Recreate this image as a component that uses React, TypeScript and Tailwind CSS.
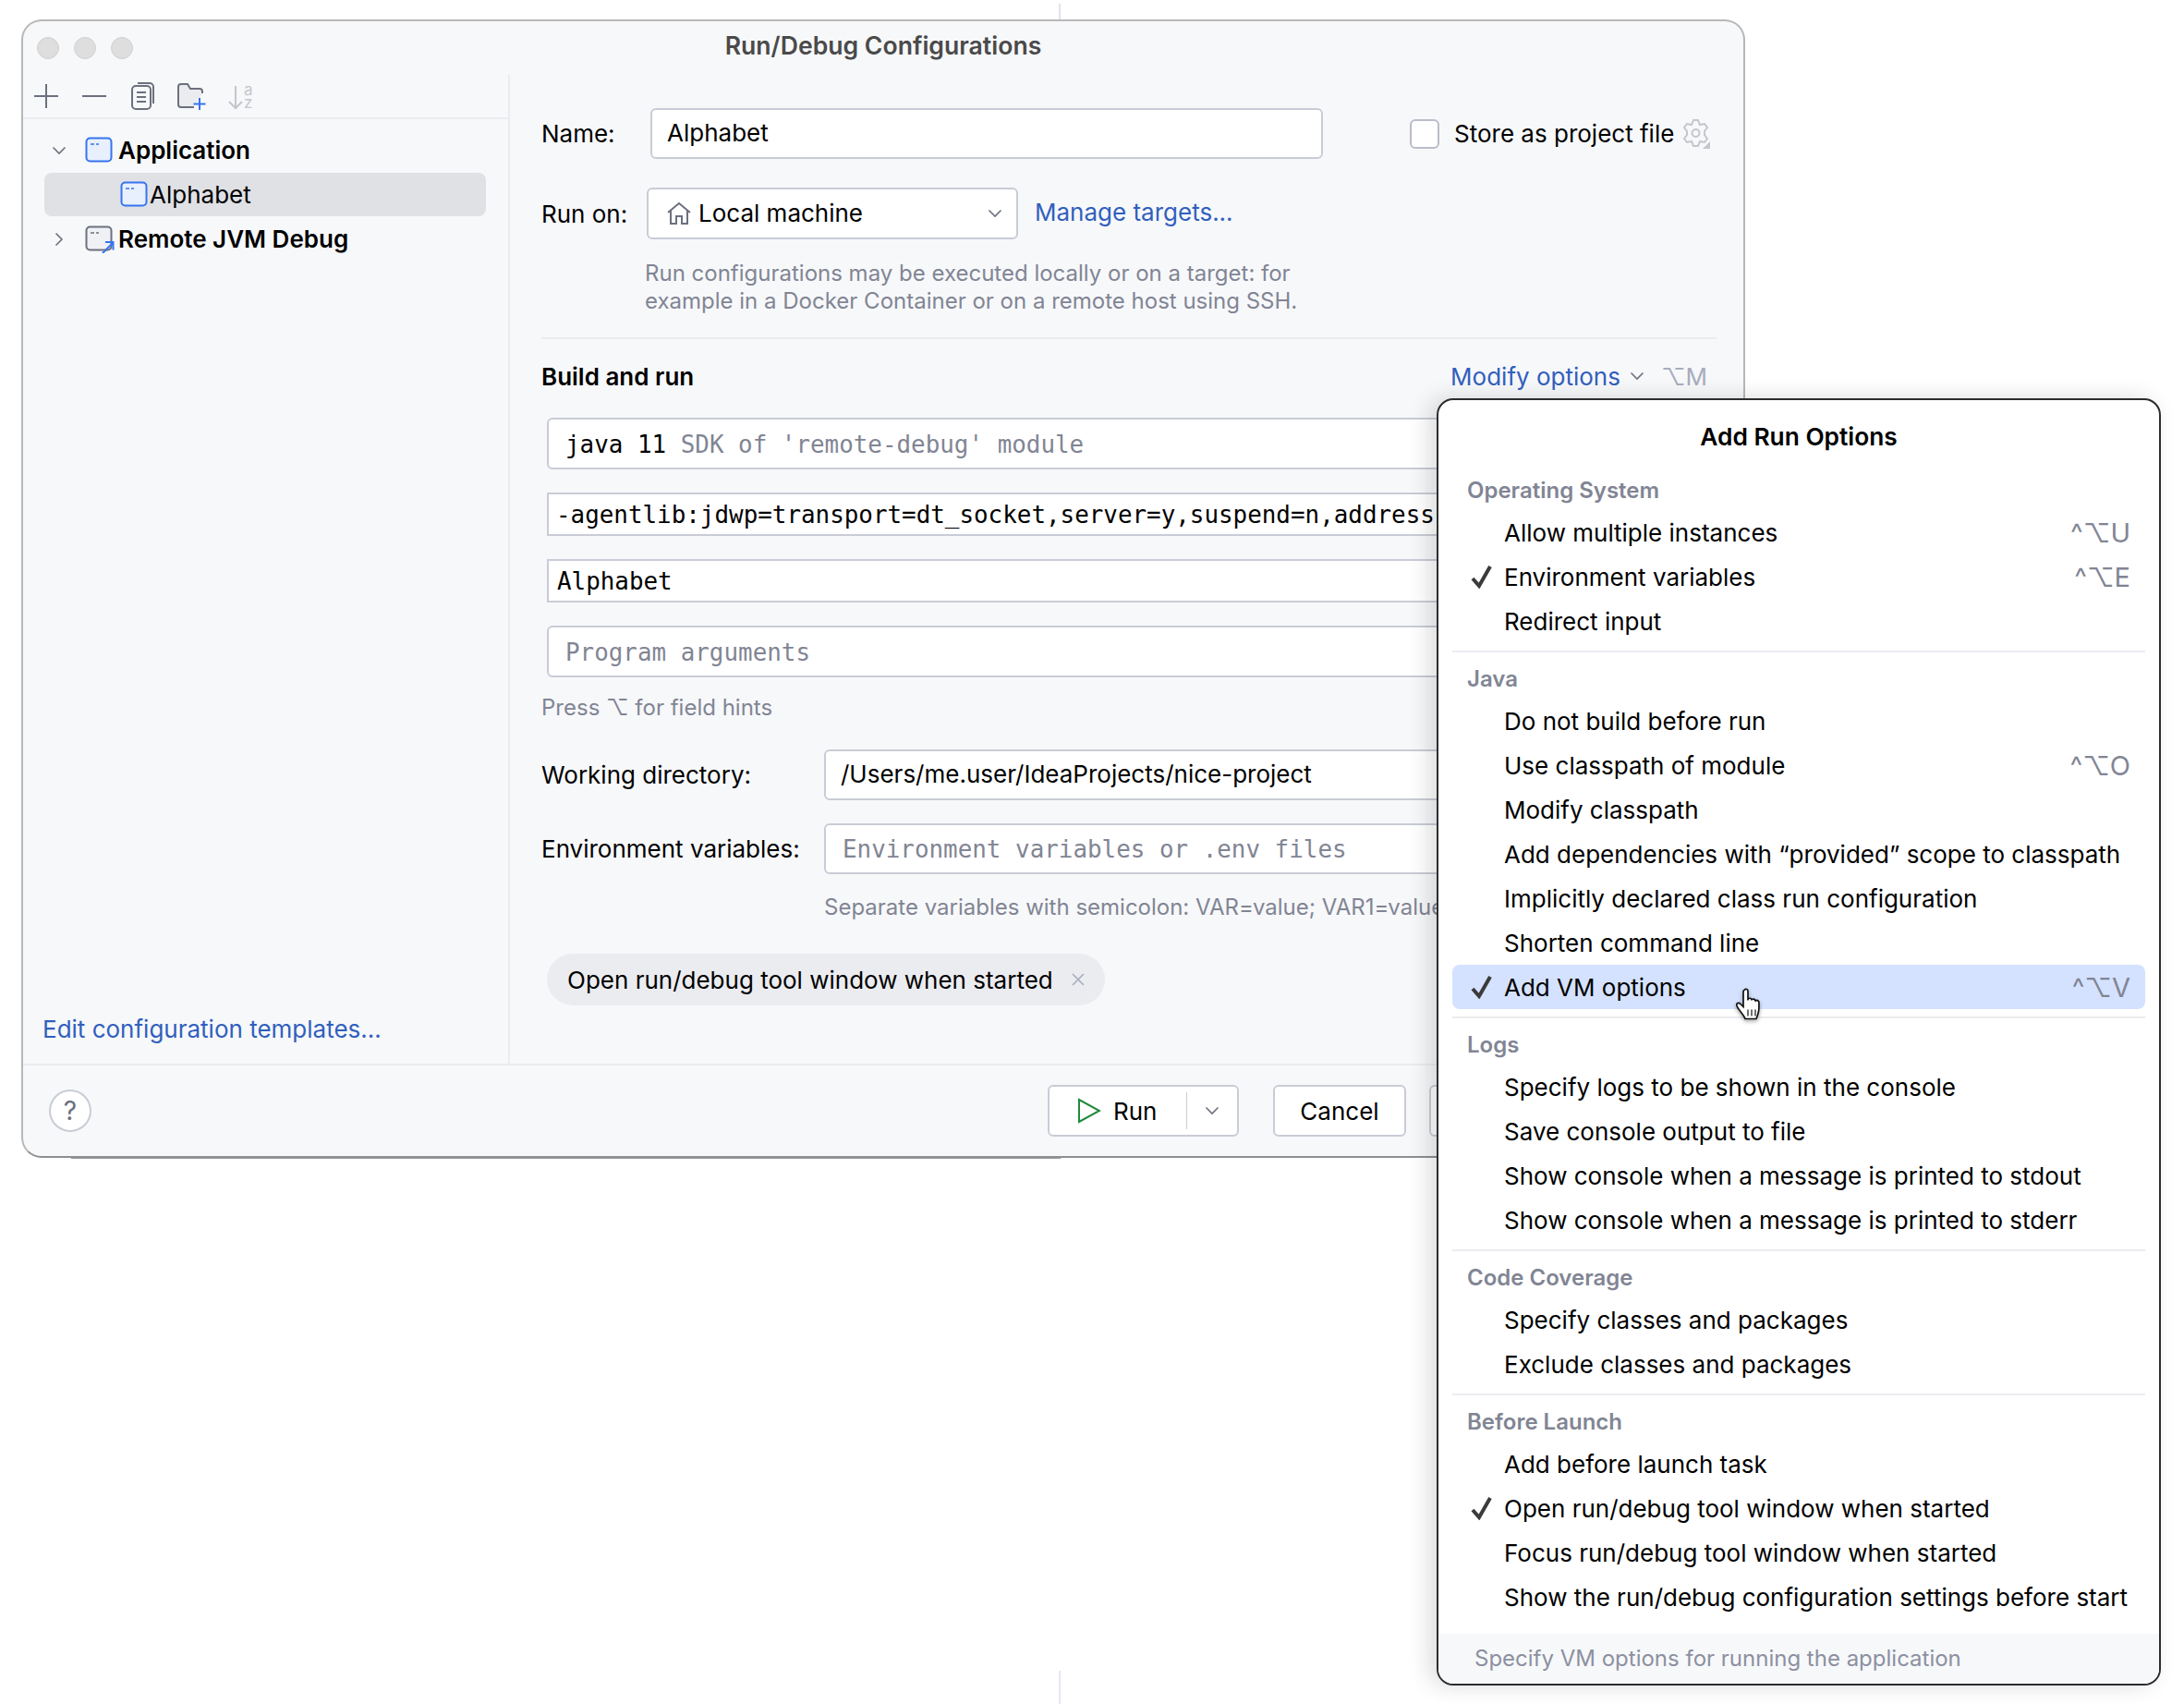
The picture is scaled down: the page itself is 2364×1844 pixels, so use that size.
import React from 'react';

type MenuRow = { label: string; checked?: boolean; keys?: string; active?: boolean };
type MenuSection = { title: string; rows: MenuRow[] };

const sections: MenuSection[] = [
  {
    title: 'Operating System',
    rows: [
      { label: 'Allow multiple instances', keys: '^⌥U' },
      { label: 'Environment variables', checked: true, keys: '^⌥E' },
      { label: 'Redirect input' },
    ],
  },
  {
    title: 'Java',
    rows: [
      { label: 'Do not build before run' },
      { label: 'Use classpath of module', keys: '^⌥O' },
      { label: 'Modify classpath' },
      { label: 'Add dependencies with “provided” scope to classpath' },
      { label: 'Implicitly declared class run configuration' },
      { label: 'Shorten command line' },
      { label: 'Add VM options', checked: true, keys: '^⌥V', active: true },
    ],
  },
  {
    title: 'Logs',
    rows: [
      { label: 'Specify logs to be shown in the console' },
      { label: 'Save console output to file' },
      { label: 'Show console when a message is printed to stdout' },
      { label: 'Show console when a message is printed to stderr' },
    ],
  },
  {
    title: 'Code Coverage',
    rows: [{ label: 'Specify classes and packages' }, { label: 'Exclude classes and packages' }],
  },
  {
    title: 'Before Launch',
    rows: [
      { label: 'Add before launch task' },
      { label: 'Open run/debug tool window when started', checked: true },
      { label: 'Focus run/debug tool window when started' },
      { label: 'Show the run/debug configuration settings before start' },
    ],
  },
];

const Chevron = ({ className = '' }: { className?: string }) => (
  <svg viewBox="0 0 16 10" className={className} fill="none" stroke="currentColor" strokeWidth="1.6">
    <path d="M1.5 1.5 8 8l6.5-6.5" />
  </svg>
);

const AppIcon = ({ remote = false }: { remote?: boolean }) => (
  <svg viewBox="0 0 32 30" className="h-[30px] w-[32px] shrink-0" fill="none">
    <rect
      x="1.5"
      y="1.5"
      width="27"
      height="25"
      rx="4"
      fill={remote ? '#f0f1f4' : '#e8effd'}
      stroke={remote ? '#6c707e' : '#3574f0'}
      strokeWidth="2"
    />
    <path d="M6 8h4M12 8h3" stroke={remote ? '#6c707e' : '#3574f0'} strokeWidth="1.6" />
    {remote && <path d="M19 30 30 19M22 18h8.500v8.500" stroke="#3574f0" strokeWidth="2" />}
  </svg>
);

const Toolbar = () => (
  <div className="flex h-[48px] items-center border-b-2 border-[#ebecf0] text-[#6c707e]">
    <svg viewBox="0 0 28 28" className="ml-[11px] h-[28px] w-[28px]" stroke="currentColor" strokeWidth="2">
      <path d="M14 1v26M1 14h26" />
    </svg>
    <svg viewBox="0 0 28 28" className="ml-[24px] h-[28px] w-[28px]" stroke="currentColor" strokeWidth="2">
      <path d="M1 14h26" />
    </svg>
    <svg viewBox="0 0 26 30" className="ml-[26px] h-[30px] w-[26px]" fill="none" stroke="currentColor" strokeWidth="2">
      <rect x="1" y="4" width="20" height="25" rx="4" />
      <path d="M7 1h13a4 4 0 0 1 4 4v18M6 11h10M6 16h10M6 21h10" />
    </svg>
    <svg viewBox="0 0 32 32" className="ml-[24px] h-[32px] w-[32px]" fill="none">
      <path
        d="M27 13v-2a3 3 0 0 0-3-3H14l-3-5H4a3 3 0 0 0-3 3v19a3 3 0 0 0 3 3h14"
        fill="#ebecf0"
        stroke="#6c707e"
        strokeWidth="2"
      />
      <path d="M24 18v13M17.500 24.500h13" stroke="#3574f0" strokeWidth="2" />
    </svg>
    <svg viewBox="0 0 30 36" className="ml-[23px] h-[36px] w-[30px]" fill="none" stroke="#c4c6cc" strokeWidth="2">
      <path d="M8 7v24M1 24l7 7 7-7" />
      <text x="17" y="17" fontSize="17" fill="#c4c6cc" stroke="none" fontFamily="Inter, sans-serif">a</text>
      <text x="17" y="31" fontSize="17" fill="#c4c6cc" stroke="none" fontFamily="Inter, sans-serif">z</text>
    </svg>
  </div>
);

const Sidebar = () => (
  <div className="flex w-[527px] shrink-0 flex-col border-r-2 border-[#ebecf0]">
    <Toolbar />
    <div className="mt-[10px] flex h-[47px] items-center pl-[31px] font-semibold">
      <Chevron className="h-[10px] w-[16px] text-[#6c707e]" />
      <span className="ml-[20px] flex items-center gap-[4px]">
        <AppIcon />
        Application
      </span>
    </div>
    <div className="mt-[1px] mr-[24px] ml-[23px] flex h-[47px] items-center rounded-[8px] bg-[#dfe1e5] pl-[82px]">
      <AppIcon />
      <span>Alphabet</span>
    </div>
    <div className="flex h-[49px] items-center pl-[31px] font-semibold">
      <Chevron className="h-[10px] w-[16px] -rotate-90 text-[#6c707e]" />
      <span className="ml-[20px] flex items-center gap-[4px]">
        <AppIcon remote />
        Remote JVM Debug
      </span>
    </div>
    <div className="mt-auto mb-[18px] pl-[21px] text-[#315fbd]">Edit configuration templates...</div>
  </div>
);

const Field = ({
  className = '',
  children,
}: {
  className?: string;
  children: React.ReactNode;
}) => (
  <div
    className={`flex items-center overflow-hidden border-2 border-[#c9ccd6] bg-white whitespace-nowrap ${className}`}
  >
    {children}
  </div>
);

const mono = "pt-[2px] font-['DejaVu_Sans_Mono',monospace] text-[25.900px] tracking-[0px]";

const MainPanel = () => (
  <div className="min-w-0 flex-1 pt-[36px] pl-[34px]">
    <div className="flex h-[55px] items-center">
      <span className="w-[118px] shrink-0">Name:</span>
      <Field className="h-[55px] w-[728px] rounded-[6px] pb-[2px] pl-[16px]">Alphabet</Field>
      <span className="ml-[94px] h-[32px] w-[32px] rounded-[6px] border-2 border-[#b9bdc9] bg-white" />
      <span className="ml-[16px]">Store as project file</span>
      <svg viewBox="0 0 30 32" className="ml-[9px] h-[32px] w-[30px]" fill="none" stroke="#c4c6cc" strokeWidth="2">
        <path d="M12 1h5l2 5 5-1 3 4-3 4v4l3 4-3 4-5-1-2 5h-5l-2-5-5 1-3-4 3-4v-4L2 9l3-4 5 1z" />
        <circle cx="14.500" cy="15" r="4" />
        <path d="M30 24v8h-8z" fill="#c4c6cc" stroke="none" />
      </svg>
    </div>
    <div className="mt-[31px] flex h-[56px] items-center">
      <span className="w-[114px] shrink-0">Run on:</span>
      <Field className="h-[56px] w-[402px] rounded-[6px] pl-[19px]">
        <svg viewBox="0 0 28 28" className="h-[28px] w-[28px] shrink-0" fill="none" stroke="#6c707e" strokeWidth="2">
          <path d="M2 13 14 3l12 10M5 11v14h6v-8h6v8h6V11" />
        </svg>
        <span className="mb-[2px] ml-[7px]">Local machine</span>
        <Chevron className="mr-[15px] ml-auto h-[10px] w-[16px] text-[#6c707e]" />
      </Field>
      <span className="mb-[4px] ml-[18px] text-[#315fbd]">Manage targets...</span>
    </div>
    <div className="mt-[22px] ml-[112px] text-[24px] leading-[30px] text-[#818594]">
      <div>Run configurations may be executed locally or on a target: for</div>
      <div>example in a Docker Container or on a remote host using SSH.</div>
    </div>
    <div className="mt-[24px] mr-[29px] h-[2px] bg-[#ebecf0]" />
    <div className="mt-[24px] flex h-[32px] items-center">
      <span className="font-semibold">Build and run</span>
      <span className="ml-auto text-[#315fbd]">Modify options</span>
      <Chevron className="ml-[10px] h-[10px] w-[16px] text-[#6c707e]" />
      <span className="mr-[39px] ml-[18px] text-[#a8adbd]">⌥M</span>
    </div>
    <div className="ml-[6px] flex flex-col">
      <Field className={`mt-[29px] h-[56px] rounded-[6px] pl-[18px] ${mono}`}>
        java 11&nbsp;<span className="text-[#818594]">SDK of 'remote-debug' module</span>
      </Field>
      <Field className={`mt-[25px] h-[47px] pl-[8px] ${mono}`}>
        -agentlib:jdwp=transport=dt_socket,server=y,suspend=n,address
      </Field>
      <Field className={`mt-[25px] h-[47px] pl-[9px] ${mono}`}>Alphabet</Field>
      <Field className={`mt-[25px] h-[56px] rounded-[6px] pl-[18px] text-[#818594] ${mono}`}>Program arguments</Field>
    </div>
    <div className="mt-[18px] flex h-[30px] items-center text-[24px] text-[#818594]">Press ⌥ for field hints</div>
    <div className="mt-[30px] flex h-[55px] items-center">
      <span className="w-[306px] shrink-0">Working directory:</span>
      <Field className="h-[55px] flex-1 rounded-[6px] pb-[2px] pl-[16px]">/Users/me.user/IdeaProjects/nice-project</Field>
    </div>
    <div className="mt-[25px] flex h-[55px] items-center">
      <span className="w-[306px] shrink-0">Environment variables:</span>
      <Field className={`h-[55px] flex-1 rounded-[6px] pl-[18px] text-[#818594] ${mono}`}>
        Environment variables or .env files
      </Field>
    </div>
    <div className="mt-[21px] ml-[306px] h-[30px] text-[24px] leading-[30px] whitespace-nowrap text-[#818594]">
      Separate variables with semicolon: VAR=value; VAR1=value1
    </div>
    <div className="mt-[35px] ml-[6px] flex h-[56px] w-[604px] items-center rounded-full bg-[#ebecf0] pl-[22px]">
      Open run/debug tool window when started
      <svg viewBox="0 0 14 14" className="ml-[20px] h-[14px] w-[14px]" stroke="#a8adbd" strokeWidth="1.600">
        <path d="m1 1 12 12M13 1 1 13" />
      </svg>
    </div>
  </div>
);

const Footer = () => (
  <div className="flex h-[100px] items-center border-t-2 border-[#ebecf0]">
    <span className="ml-[28px] flex h-[46px] w-[46px] items-center justify-center rounded-full border-2 border-[#c9ccd6] bg-white text-[28px] text-[#6c707e]">
      ?
    </span>
    <div className="ml-[1035px] flex h-[56px] w-[207px] items-center rounded-[6px] border-2 border-[#c9ccd6] bg-white pl-[30px]">
      <svg viewBox="0 0 26 28" className="h-[28px] w-[26px] shrink-0" fill="none" stroke="#208a3c" strokeWidth="2">
        <path d="M2 2v24l22-12z" />
      </svg>
      <span className="ml-[13px]">Run</span>
      <span className="ml-[32px] h-[40px] w-[1px] bg-[#c9ccd6]" />
      <Chevron className="ml-[19px] h-[10px] w-[16px] text-[#6c707e]" />
    </div>
    <span className="ml-[37px] flex h-[56px] w-[144px] items-center justify-center rounded-[6px] border-2 border-[#c9ccd6] bg-white">
      Cancel
    </span>
    <span className="ml-[25px] h-[56px] w-[60px] rounded-[6px] border-2 border-[#c9ccd6] bg-white" />
  </div>
);

const HandCursor = () => (
  <svg
    viewBox="0 0 30 36"
    className="absolute top-[1068px] left-[1879px] h-[37px] w-[30px] drop-shadow-[0_2px_2px_rgba(0,0,0,0.35)]"
    fill="#fff"
    stroke="#111"
    strokeWidth="1.700"
  >
    <path d="M9 3c2-2 4-1 4 1v10c0-3 4-3 4 0 0-2 4-2 4 1 1-2 4-1 4 2 0 7 0 10-3 17H10c-1-4-7-9-9-14-1-3 2-4 4-2l3 3V5c0-1 0-2 1-2z" />
    <path d="M13 24v7M17 24v7M21 24v7" strokeWidth="1.200" />
  </svg>
);

const Popup = () => (
  <div className="absolute top-[431px] left-[1555px] flex h-[1393px] w-[784px] flex-col overflow-hidden rounded-[18px] border-2 border-[#2b2d30] bg-white shadow-[-8px_0_24px_rgba(0,0,0,0.14)]">
    <div className="flex h-[77px] shrink-0 items-center justify-center pt-[2px] text-[26.300px] font-semibold">Add Run Options</div>
    <div className="flex-1 px-[15px]">
      {sections.map((section, i) => (
        <div key={section.title}>
          {i > 0 && <div className="my-[8px] h-[2px] bg-[#ebecf0]" />}
          <div className="flex h-[42px] items-center pl-[16px] text-[24px] font-semibold text-[#818594]">
            {section.title}
          </div>
          {section.rows.map((row) => (
            <div
              key={row.label}
              className={`flex h-[48px] items-center rounded-[8px] pr-[16px] whitespace-nowrap ${row.active ? 'bg-[#d4e2ff]' : ''}`}
            >
              <span className="flex w-[56px] shrink-0 justify-center pl-[8px]">
                {row.checked && (
                  <svg viewBox="0 0 24 26" className="h-[26px] w-[24px]" fill="none" stroke="#3b3b3b" strokeWidth="4">
                    <path d="M2 15l7 8L21 2" />
                  </svg>
                )}
              </span>
              {row.label}
              {row.keys && <span className="ml-auto text-[29px] leading-none text-[#818594]">{row.keys}</span>}
            </div>
          ))}
        </div>
      ))}
    </div>
    <div className="flex h-[54px] shrink-0 items-center bg-[#f7f8fa] pl-[39px] text-[24px] text-[#8c90a0]">
      Specify VM options for running the application
    </div>
  </div>
);

export default function App() {
  return (
    <div className="relative h-[1844px] w-[2364px] overflow-hidden bg-white font-['Inter','DejaVu_Sans',sans-serif] text-[26px] text-black">
      {/* edges of the window behind the dialog */}
      <div className="absolute top-[4px] left-[1146px] h-[20px] w-[2px] bg-[#e4e2ec]" />
      <div className="absolute top-[1808px] left-[1146px] h-[36px] w-[2px] bg-[#e8e6ee]" />
      <div className="absolute top-[1252px] left-[77px] h-[2px] w-[1071px] bg-[#999999]" />
      <div className="relative ml-[23px] pt-[21px]">
        <div className="flex h-[1232px] w-[1866px] flex-col overflow-hidden rounded-[22px] border-2 border-[#b8b8b8] border-b-[#8f8f8f] bg-[#f7f8fa]">
          <div className="relative flex h-[58px] shrink-0 items-center pl-[15px]">
            <div className="flex gap-[16px]">
              <span className="h-[24px] w-[24px] rounded-full border border-[#d0d0d0] bg-[#dedede]" />
              <span className="h-[24px] w-[24px] rounded-full border border-[#d0d0d0] bg-[#dedede]" />
              <span className="h-[24px] w-[24px] rounded-full border border-[#d0d0d0] bg-[#dedede]" />
            </div>
            <span className="absolute inset-x-0 top-[7px] text-center text-[26.600px] font-semibold text-[#4a4a4a]">
              Run/Debug Configurations
            </span>
          </div>
          <div className="flex min-h-0 flex-1">
            <Sidebar />
            <MainPanel />
          </div>
          <Footer />
        </div>
      </div>
      <Popup />
      <HandCursor />
    </div>
  );
}
